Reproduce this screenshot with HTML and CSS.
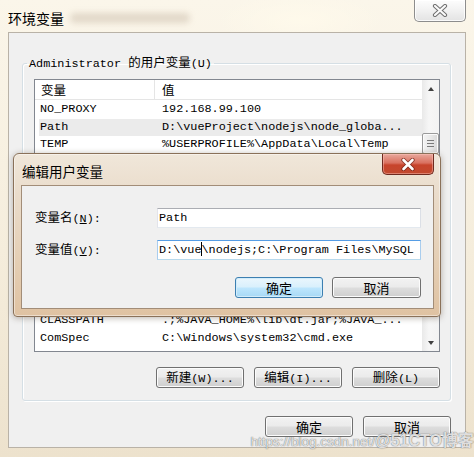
FILE: index.html
```html
<!DOCTYPE html>
<html lang="zh-CN">
<head>
<meta charset="utf-8">
<title>环境变量</title>
<link rel="stylesheet" href="styles.css">
</head>
<body>
<div class="window">
  <div class="titlebar">
    <span class="title">环境变量</span>
    <span class="blur-text"></span>
    <button class="close-grey" aria-label="关闭">
      <svg width="16" height="13" viewBox="0 0 16 13">
        <path d="M3 2 L13 11 M13 2 L3 11" stroke="#6f6f6f" stroke-width="4.2" stroke-linecap="round" fill="none"/>
        <path d="M3 2 L13 11 M13 2 L3 11" stroke="#fafafa" stroke-width="2.2" stroke-linecap="round" fill="none"/>
      </svg>
    </button>
  </div>

  <div class="client">
    <fieldset class="group">
      <legend>Administrator <span class="zh">的用户变量</span>(U)</legend>
      <div class="listview">
        <div class="list-main">
          <div class="list-header">
            <div class="h1 zh">变量</div>
            <div class="h2 zh">值</div>
          </div>
          <div class="list-body">
            <div class="row"><span class="c1">NO_PROXY</span><span class="c2">192.168.99.100</span></div>
            <div class="row sel"><span class="c1">Path</span><span class="c2">D:\vueProject\nodejs\node_globa...</span></div>
            <div class="row"><span class="c1">TEMP</span><span class="c2">%USERPROFILE%\AppData\Local\Temp</span></div>
            <div class="rows-hidden"></div>
            <div class="row"><span class="c1">CLASSPATH</span><span class="c2">.;%JAVA_HOME%\lib\dt.jar;%JAVA_...</span></div>
            <div class="row"><span class="c1">ComSpec</span><span class="c2">C:\Windows\system32\cmd.exe</span></div>
          </div>
        </div>
        <div class="vscroll">
          <div class="arrow"><span class="tri-up"></span></div>
          <div class="track"><div class="thumb"><span class="grip"></span></div></div>
          <div class="arrow"><span class="tri-down"></span></div>
        </div>
      </div>
      <div class="btn-row">
        <button class="btn"><span class="zh">新建</span>(W)...</button>
        <button class="btn"><span class="zh">编辑</span>(I)...</button>
        <button class="btn"><span class="zh">删除</span>(L)</button>
      </div>
    </fieldset>
    <div class="btn-row bottom">
      <button class="btn zh">确定</button>
      <button class="btn zh">取消</button>
    </div>
  </div>

  <div class="dialog">
    <div class="dlg-title">
      <span class="dlg-caption">编辑用户变量</span>
      <button class="close-red" aria-label="关闭">
        <svg width="16" height="13" viewBox="0 0 16 13">
          <path d="M3.5 2 L12.5 11 M12.5 2 L3.5 11" stroke="#6b1e12" stroke-width="4.4" stroke-linecap="round" fill="none" opacity="0.7"/>
          <path d="M3.5 2 L12.5 11 M12.5 2 L3.5 11" stroke="#ffffff" stroke-width="2.6" stroke-linecap="round" fill="none"/>
        </svg>
      </button>
    </div>
    <div class="dlg-client">
      <div class="form">
        <label class="lbl"><span class="zh">变量名</span>(<u>N</u>):</label>
        <div class="field">Path</div>
        <label class="lbl"><span class="zh">变量值</span>(<u>V</u>):</label>
        <div class="field focus">D:\vue<span class="caret"></span>\nodejs;C:\Program Files\MySQL</div>
      </div>
      <div class="dlg-buttons">
        <button class="btn default zh">确定</button>
        <button class="btn zh wide">取消</button>
      </div>
    </div>
  </div>

  <div class="watermark"><span class="wm-url">https://blog.csdn.net/</span><span class="wm-brand">@51CTO博客</span></div>
</div>
</body>
</html>
```

FILE: styles.css
```css
html, body {
  margin: 0;
  padding: 0;
}

body {
  width: 474px;
  height: 457px;
  overflow: hidden;
  background:
    radial-gradient(ellipse 120px 40px at 300px 20px, rgba(255, 250, 235, 0.9), rgba(255, 250, 235, 0) 70%),
    linear-gradient(180deg, #fbf6ea 0%, #f5eddc 55%, #ede2cd 100%);
  font-family: "Liberation Mono", "Noto Sans CJK SC", monospace;
  font-size: 11.8px;
  color: #000;
}

.zh {
  font-family: "Noto Sans CJK SC", sans-serif;
  font-size: 12.5px;
}

.window {
  position: relative;
  width: 474px;
  height: 457px;
}

/* ---------- outer title bar ---------- */
.titlebar {
  display: flex;
  align-items: flex-start;
  height: 32px;
}

.title {
  font-family: "Noto Sans CJK SC", sans-serif;
  font-size: 14px;
  line-height: 20px;
  padding: 8px 0 0 8px;
}

.blur-text {
  width: 120px;
  height: 10px;
  margin: 13px 0 0 6px;
  border-radius: 5px;
  background: rgba(140, 115, 85, 0.22);
  filter: blur(3px);
}

.close-grey {
  margin: 0 8px 0 auto;
  width: 52px;
  height: 22px;
  padding: 0;
  border: 1px solid #8d8d8d;
  border-top: none;
  border-radius: 0 0 5px 5px;
  background: linear-gradient(180deg, #fdfdfd 0%, #f1f1f1 50%, #e3e3e3 100%);
  box-shadow: inset 0 0 0 1px rgba(255, 255, 255, 0.8);
  display: flex;
  align-items: center;
  justify-content: center;
}

/* ---------- client ---------- */
.client {
  margin: 0 8px;
  height: 416px;
  box-sizing: border-box;
  border: 1px solid #b9b2a7;
  background: #f0f0f0;
  padding: 0 14px 0 13px;
}

.group {
  margin: 21px 0 0;
  padding: 7px 10px 12px 11px;
  border: 1px solid #d5dfe5;
  border-radius: 3px;
  box-shadow: inset 1px 1px 0 #fff, 1px 1px 0 #fff;
  min-width: 0;
}

.group legend {
  padding: 0 2px;
  margin-left: -7px;
  line-height: 16px;
}

/* ---------- list view ---------- */
.listview {
  display: flex;
  height: 273px;
  box-sizing: border-box;
  border: 1px solid #828790;
  background: #fff;
}

.list-main {
  flex: 1;
  min-width: 0;
  overflow: hidden;
}

.list-header {
  display: flex;
  height: 20px;
  box-sizing: border-box;
  border-bottom: 1px solid #e5e5e5;
  line-height: 19px;
}

.list-header .h1 {
  width: 120px;
  box-sizing: border-box;
  padding-left: 6px;
  border-right: 1px solid #e5e5e5;
}

.list-header .h2 {
  padding-left: 7px;
}

.list-body {
  padding-top: 1px;
}

.row {
  display: flex;
  height: 17.6px;
  line-height: 17.6px;
  margin-left: 4px;
  white-space: nowrap;
}

.row.sel {
  background: #ebebeb;
}

.row .c1 {
  width: 123px;
  flex: none;
  padding-left: 1px;
  box-sizing: border-box;
}

.rows-hidden {
  height: 158.4px;
}

.vscroll {
  width: 17px;
  flex: none;
  display: flex;
  flex-direction: column;
  background: linear-gradient(90deg, #e9e9e9 0%, #f6f6f6 40%, #f3f3f3 100%);
}

.arrow {
  height: 17px;
  display: flex;
  align-items: center;
  justify-content: center;
}

.tri-up {
  width: 0;
  height: 0;
  border-left: 3.5px solid transparent;
  border-right: 3.5px solid transparent;
  border-bottom: 4px solid #404040;
}

.tri-down {
  width: 0;
  height: 0;
  border-left: 3.5px solid transparent;
  border-right: 3.5px solid transparent;
  border-top: 4px solid #404040;
}

.track {
  flex: 1;
}

.thumb {
  margin: 36px 0 0 0;
  height: 21px;
  box-sizing: border-box;
  border: 1px solid #9a9a9a;
  border-radius: 2px;
  background: linear-gradient(90deg, #f4f4f4 0%, #e9e9e9 50%, #d8d8d8 100%);
  box-shadow: inset 0 0 0 1px #fbfbfb;
  display: flex;
  align-items: center;
  justify-content: center;
}

.grip {
  width: 7px;
  height: 7px;
  background: repeating-linear-gradient(180deg, #7a7a7a 0 1px, transparent 1px 3px);
}

/* ---------- buttons ---------- */
.btn-row {
  display: flex;
  justify-content: flex-end;
  gap: 10px;
  margin-top: 15px;
}

.btn {
  width: 88px;
  height: 21px;
  padding: 0;
  box-sizing: border-box;
  border: 1px solid #707070;
  border-radius: 3px;
  background: linear-gradient(180deg, #f2f2f2 0%, #ebebeb 48%, #dddddd 52%, #cfcfcf 100%);
  box-shadow: inset 0 0 0 1px #fcfcfc;
  font-family: "Liberation Mono", "Noto Sans CJK SC", monospace;
  font-size: 11.8px;
  line-height: 18px;
  color: #000;
  white-space: nowrap;
}

.btn.zh {
  font-family: "Noto Sans CJK SC", sans-serif;
  font-size: 13px;
}

.btn.default {
  border-color: #3c7fb1;
  background: linear-gradient(180deg, #eaf6fd 0%, #d9f0fc 48%, #bee6fd 52%, #a7d9f5 100%);
  box-shadow: inset 0 0 0 1px #d2ecfa;
}

.btn.wide {
  width: 89px;
}

.btn-row.bottom {
  margin-top: 15px;
}

/* ---------- edit dialog ---------- */
.dialog {
  position: absolute;
  left: 13px;
  top: 153px;
  width: 428px;
  box-sizing: border-box;
  border: 1px solid #8a7159;
  border-radius: 6px 6px 4px 4px;
  background: linear-gradient(180deg, #f0e7da 0%, #eadccb 25%, #e4cdb2 70%, #dfc2a2 100%);
  box-shadow: inset 0 0 0 1px rgba(255, 255, 255, 0.45), 0 1px 6px rgba(60, 40, 20, 0.35);
}

.dlg-title {
  display: flex;
  align-items: flex-start;
  height: 31px;
}

.dlg-caption {
  font-family: "Noto Sans CJK SC", sans-serif;
  font-size: 13.5px;
  line-height: 20px;
  padding: 7px 0 0 8px;
}

.close-red {
  margin: 0 6px 0 auto;
  width: 52px;
  height: 21px;
  padding: 0;
  border: 1px solid #6e2a1f;
  border-top: none;
  border-radius: 0 0 5px 5px;
  background: linear-gradient(180deg, #e8a89c 0%, #d9705f 45%, #c7442c 55%, #c24a2f 100%);
  box-shadow: inset 0 0 0 1px rgba(255, 200, 190, 0.45);
  display: flex;
  align-items: center;
  justify-content: center;
}

.dlg-client {
  margin: 0 6px 7px 7px;
  border: 1px solid #a28d78;
  background: #f0f0f0;
  padding: 21px 12px 10px 12px;
}

.form {
  display: grid;
  grid-template-columns: 123px 1fr;
  row-gap: 10px;
  align-items: center;
}

.lbl {
  padding-left: 1px;
  line-height: 20px;
}

.field {
  height: 20px;
  box-sizing: border-box;
  border: 1px solid;
  border-color: #abadb3 #dbdfe6 #e3e9ef #e2e3ea;
  background: #fff;
  padding-left: 1px;
  line-height: 18px;
  white-space: nowrap;
  overflow: hidden;
}

.field.focus {
  border-color: #569de5 #a9cdee #b7d9ed #a9cdee;
}

.caret {
  display: inline-block;
  width: 1px;
  height: 14px;
  background: #000;
  vertical-align: -3px;
  margin-right: -1px;
}

.dlg-buttons {
  display: flex;
  justify-content: flex-end;
  gap: 9px;
  margin-top: 16px;
}

/* ---------- watermark ---------- */
.watermark {
  position: absolute;
  right: 0;
  bottom: 6px;
  white-space: nowrap;
  color: rgba(255, 255, 255, 0.8);
  text-shadow: 0 0 1px rgba(90, 90, 90, 0.7), 0 0 1px rgba(90, 90, 90, 0.7);
}

.wm-url {
  font-family: "Liberation Sans", sans-serif;
  font-size: 13.5px;
}

.wm-brand {
  font-family: "Liberation Sans", "Noto Sans CJK SC", sans-serif;
  font-size: 16px;
  font-weight: bold;
}
```
